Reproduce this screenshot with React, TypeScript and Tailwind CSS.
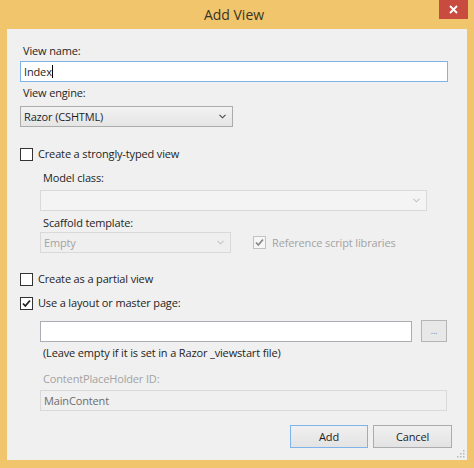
import React from 'react';

const font = "font-['Open_Sans','Noto_Sans',sans-serif]";

function Chevron({ disabled }: { disabled?: boolean }) {
  return (
    <svg width="7" height="5" viewBox="0 0 7 5" className="shrink-0">
      <path
        d="M0.5 0.8 L3.5 3.8 L6.5 0.8"
        fill="none"
        stroke={disabled ? '#c4c4c4' : '#444444'}
        strokeWidth="1.1"
      />
    </svg>
  );
}

function CheckBox({ checked, disabled }: { checked?: boolean; disabled?: boolean }) {
  return (
    <span
      className={
        'w-[13px] h-[13px] shrink-0 border flex items-center justify-center ' +
        (disabled ? 'border-[#c2c2c2] bg-[#f6f6f6]' : 'border-[#333333] bg-white')
      }
    >
      {checked && (
        <svg width="11" height="11" viewBox="0 0 11 11">
          <path
            d="M2 5.5 L4.3 8 L9 2.5"
            fill="none"
            stroke={disabled ? '#8a8a8a' : '#222222'}
            strokeWidth="1.8"
          />
        </svg>
      )}
    </span>
  );
}

function CheckRow({ label, checked }: { label: string; checked?: boolean }) {
  return (
    <div className="flex items-center h-[16px] gap-[5px]">
      <CheckBox checked={checked} />
      <span className="text-[#1e1e1e]">{label}</span>
    </div>
  );
}

export default function App() {
  return (
    <div className={`w-[474px] h-[468px] bg-[#f0c56c] flex flex-col text-[11px] tracking-[-0.15px] leading-[16px] ${font}`}>
      {/* title bar */}
      <div className="h-[29px] flex items-start">
        <div className="flex-1" />
        <div className="pt-[5px] text-[14px] leading-[20px] tracking-normal text-[#3a3426]">Add View</div>
        <div className="flex-1 flex justify-end pr-[6px]">
          <div className="w-[29px] h-[19px] bg-[#c94a3f] flex items-center justify-center">
            <svg width="9" height="9" viewBox="0 0 9 9">
              <path d="M1 1 L8 8 M8 1 L1 8" stroke="#ffffff" strokeWidth="1.8" />
            </svg>
          </div>
        </div>
      </div>

      {/* client area */}
      <div className="relative mx-[7px] mb-[8px] flex-1 bg-[#f0f0f0] pl-[13px] pt-[14px] flex flex-col">
        <div className="pl-[3px] text-[#1e1e1e]">View name:</div>
        <div className="mt-[2px] w-[428px] h-[21px] border border-[#7eb4ea] bg-white flex items-center pl-[3px] text-[#1e1e1e]">
          Index<span className="w-px h-[13px] bg-black" />
        </div>

        <div className="mt-[3px] pl-[3px] text-[#1e1e1e]">View engine:</div>
        <div className="mt-[5px] w-[213px] h-[21px] border border-[#acacac] bg-gradient-to-b from-[#f2f2f2] to-[#e5e5e5] flex items-center justify-between pl-[3px] pr-[6px] text-[#1e1e1e]">
          <span>Razor (CSHTML)</span>
          <Chevron />
        </div>

        <div className="mt-[19px]">
          <CheckRow label="Create a strongly-typed view" />
        </div>

        <div className="pl-[20px] flex flex-col">
          <div className="mt-[8px] pl-[3px] text-[#1e1e1e]">Model class:</div>
          <div className="mt-[4px] w-[387px] h-[21px] border border-[#d9d9d9] bg-[#f4f4f4] flex items-center justify-end pr-[6px]">
            <Chevron disabled />
          </div>
          <div className="mt-[4px] pl-[3px] text-[#1e1e1e]">Scaffold template:</div>
          <div className="mt-[1px] flex items-center">
            <div className="w-[191px] h-[21px] border border-[#d9d9d9] bg-[#efefef] flex items-center justify-between pl-[3px] pr-[6px] text-[#a3a3a3]">
              <span>Empty</span>
              <Chevron disabled />
            </div>
            <div className="ml-[22px] flex items-center gap-[6px]">
              <CheckBox checked disabled />
              <span className="text-[#a3a3a3]">Reference script libraries</span>
            </div>
          </div>
        </div>

        <div className="mt-[18px]">
          <CheckRow label="Create as a partial view" />
        </div>
        <div className="mt-[8px]">
          <CheckRow label="Use a layout or master page:" checked />
        </div>

        <div className="pl-[20px] flex flex-col">
          <div className="mt-[9px] flex items-center">
            <div className="w-[372px] h-[21px] border border-[#abadb3] bg-white" />
            <div className="ml-[9px] w-[26px] h-[22px] border border-[#b5b5b5] bg-[#e8e8e8] flex items-center justify-center text-[9px] text-[#888888]">
              ...
            </div>
          </div>
          <div className="mt-[3px] pl-[3px] text-[#1e1e1e]">(Leave empty if it is set in a Razor _viewstart file)</div>
          <div className="mt-[10px] pl-[3px] text-[#a3a3a3]">ContentPlaceHolder ID:</div>
          <div className="mt-[3px] w-[407px] h-[21px] border border-[#d9d9d9] bg-[#f0f0f0] flex items-center pl-[3px] text-[#6d6d6d]">
            MainContent
          </div>
        </div>

        <div className="mt-[14px] flex justify-end gap-[5px] pr-[15px]">
          <div className="w-[78px] h-[23px] border border-[#7eb4ea] bg-gradient-to-b from-[#f0f0f0] to-[#e3e3e3] flex items-center justify-center text-[#1e1e1e]">
            Add
          </div>
          <div className="w-[79px] h-[23px] border border-[#acacac] bg-gradient-to-b from-[#f0f0f0] to-[#e3e3e3] flex items-center justify-center text-[#1e1e1e]">
            Cancel
          </div>
        </div>

        {/* resize grip */}
        <svg width="9" height="9" viewBox="0 0 9 9" className="absolute right-[2px] bottom-[2px]">
          <g fill="#b8b8b8">
            <rect x="7" y="1" width="1.5" height="1.5" />
            <rect x="4" y="4" width="1.5" height="1.5" />
            <rect x="7" y="4" width="1.5" height="1.5" />
            <rect x="1" y="7" width="1.5" height="1.5" />
            <rect x="4" y="7" width="1.5" height="1.5" />
            <rect x="7" y="7" width="1.5" height="1.5" />
          </g>
        </svg>
      </div>
    </div>
  );
}
